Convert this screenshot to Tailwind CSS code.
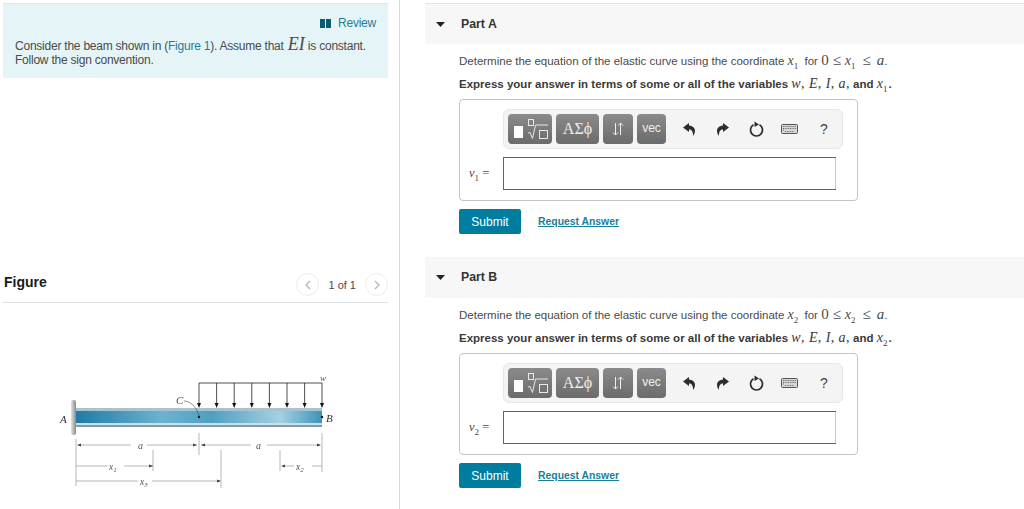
<!DOCTYPE html>
<html lang="en">
<head>
<meta charset="UTF-8">
<title>Beam problem</title>
<script src="https://cdn.jsdelivr.net/npm/@tailwindcss/browser@4"></script>
</head>
<body class="bg-white h-[509px] overflow-hidden font-['Liberation_Sans',sans-serif] text-[#4a4a4a]">
<div class="flex h-[509px]">
  <!-- left column -->
  <div class="w-[400px] h-full border-r border-[#d9d9d9] pl-[3px] pr-[11px] pt-[3px] shrink-0">
    <div class="h-[75px] bg-[#e5f5f7] border-t border-[#dfe7ea] relative pl-[12px] pt-[33px] text-[12px] leading-[14px] tracking-[-0.23px]">
      <div class="absolute right-[12px] top-[12px] flex items-center gap-[7px] text-[#2c7c92]">
        <svg width="11" height="9" viewBox="0 0 11 9"><path d="M0 0h5v9H0zM6 0h5v9H6z" fill="#0c5c70"/></svg>
        <span>Review</span>
      </div>
      <p>Consider the beam shown in (<span class="text-[#1a7f9c]">Figure 1</span>). Assume that <span class="font-['Liberation_Serif',serif] italic text-[18px] leading-[14px] tracking-[0px] ml-[1px]">EI</span> is constant.</p>
      <p>Follow the sign convention.</p>
    </div>
    <div class="mt-[190px] h-[35px] border-b border-[#dde1e5] flex items-start justify-between">
      <h2 class="font-bold text-[14px] leading-[20px] text-[#1a1a1a] ml-[1px] mt-[4px]">Figure</h2>
      <div class="flex items-center gap-[9px] mt-[5px] text-[11px]">
        <span class="w-[23px] h-[23px] rounded-full border border-[#ececec] flex items-center justify-center">
          <svg width="8" height="10" viewBox="0 0 8 10"><path d="M6 1L2 5l4 4" fill="none" stroke="#b5b5b5" stroke-width="1.300"/></svg>
        </span>
        <span class="pt-[1px]">1 of 1</span>
        <span class="w-[23px] h-[23px] rounded-full border border-[#ececec] flex items-center justify-center">
          <svg width="8" height="10" viewBox="0 0 8 10"><path d="M2 1l4 4-4 4" fill="none" stroke="#b5b5b5" stroke-width="1.300"/></svg>
        </span>
      </div>
    </div>
    <svg class="block mt-[62px] ml-[47px] blur-[0.3px]" width="300" height="135" viewBox="50 365 300 135">
      <defs>
        <linearGradient id="beam" x1="0" x2="1" y1="0" y2="0">
          <stop offset="0" stop-color="#1f7ba5"/><stop offset="0.35" stop-color="#6db3cf"/><stop offset="0.55" stop-color="#4f9fc2"/><stop offset="0.83" stop-color="#a5d0e2"/><stop offset="1" stop-color="#3f93b8"/>
        </linearGradient>
        <linearGradient id="wall" x1="0" x2="1" y1="0" y2="0">
          <stop offset="0" stop-color="#e3e3e3"/><stop offset="1" stop-color="#8a8a8a"/>
        </linearGradient>
      </defs>
      <rect x="71" y="400" width="5" height="35" rx="2" fill="url(#wall)"/>
      <rect x="76" y="408" width="246" height="3" fill="#a9c3ce"/>
      <rect x="76" y="411" width="246" height="12" fill="url(#beam)"/>
      <rect x="76" y="423" width="246" height="2" fill="#bfe3f0"/>
      <rect x="76" y="425" width="246" height="2" fill="#8b979d"/>
      <circle cx="199" cy="417" r="1.200" fill="#111"/><circle cx="322" cy="417" r="1.200" fill="#111"/>
      <g stroke="#222" fill="#111" stroke-width="0.800">
        <path d="M199 383H322" fill="none"/>
        <path d="M199 383V405M216.600 383V405M234.200 383V405M251.800 383V405M269.400 383V405M287 383V405M304.600 383V405M322 383V405" fill="none"/>
        <path d="M197 403l2 5 2-5zM214.600 403l2 5 2-5zM232.200 403l2 5 2-5zM249.800 403l2 5 2-5zM267.400 403l2 5 2-5zM285 403l2 5 2-5zM302.600 403l2 5 2-5zM320 403l2 5 2-5z" stroke="none"/>
      </g>
      <path d="M184 401c6 0 13 6 15 15" fill="none" stroke="#444" stroke-width="0.600"/>
      <g stroke="#9a9a9a" stroke-width="0.700" fill="none">
        <path d="M76 439V486M199 433V455M322 433V472M153 450V471M221 450V488M280 450V471"/>
        <path d="M78 445H131M147 445H197M201 445H251M267 445H320"/>
        <path d="M76 466H108M124 466H153M283 466H294M312 466H322M76 481H138M152 481H220"/>
      </g>
      <g fill="#444">
        <path d="M77 445l4-1.500v3zM197 445l-4-1.500v3zM201 445l4-1.500v3zM321 445l-4-1.500v3zM153 466l-4-1.500v3zM281 466l4-1.500v3zM221 481l-4-1.500v3z"/>
      </g>
      <g font-family="Liberation Serif, serif" font-style="italic" fill="#555">
        <text x="60" y="423" font-size="11" fill="#333">A</text>
        <text x="176" y="404" font-size="11">C</text>
        <text x="326" y="422" font-size="11" fill="#333">B</text>
        <text x="320" y="381" font-size="9">w</text>
        <text x="138" y="449" font-size="10">a</text>
        <text x="256" y="449" font-size="10">a</text>
        <text x="109" y="470" font-size="9.500">x<tspan font-size="7" dy="1.500">1</tspan></text>
        <text x="296" y="470" font-size="9.500">x<tspan font-size="7" dy="1.500">2</tspan></text>
        <text x="140" y="485" font-size="9.500">x<tspan font-size="7" dy="1.500">3</tspan></text>
      </g>
    </svg>
  </div>

  <!-- right column -->
  <div class="flex-1 pl-[25px] pt-[3px] min-w-0">
    <section class="h-[254px]">
      <div class="h-[41px] bg-[#f7f7f7] border-t border-[#e5e5e5] flex items-center pl-[11px] text-[12.300px] font-bold text-[#333]">
        <svg width="9" height="5" viewBox="0 0 9 5"><path d="M0 0h9L4.500 5z" fill="#222"/></svg>
        <span class="ml-[16px]">Part A</span>
      </div>
      <div class="pl-[34px]">
        <p class="mt-[9px] h-[15px] text-[11.500px] leading-[15px] whitespace-nowrap">Determine the equation of the elastic curve using the coordinate <span class="font-['Liberation_Serif',serif] italic text-[14px] leading-[15px] mr-[3px]">x<sub class="text-[9px] not-italic align-[-2px] leading-[0]">1</sub></span> for <span class="font-['Liberation_Serif',serif] text-[15px] leading-[15px]">0<span class="mx-[4px]">≤</span><i class="text-[14px] mr-[3px]">x<sub class="text-[9px] not-italic align-[-2px] leading-[0]">1</sub></i><span class="mx-[4px]">≤</span><i class="text-[15px] ml-[2px]">a</i></span>.</p>
        <p class="mt-[8px] h-[16px] text-[11.500px] leading-[16px] font-bold text-[#3a3a3a] whitespace-nowrap">Express your answer in terms of some or all of the variables <span class="font-['Liberation_Serif',serif] font-normal text-[14px] leading-[16px] tracking-[0.4px]"><i>w</i>, <i>E</i>, <i>I</i>, <i>a</i>,</span> and <span class="font-['Liberation_Serif',serif] font-normal italic text-[14px] leading-[16px] mr-[1px]">x<sub class="text-[9px] not-italic align-[-2px] leading-[0]">1</sub></span>.</p>
        <div class="mt-[7px] w-[399px] h-[102px] border border-[#c4c4c4] rounded-[4px] pt-[9px] pl-[43px]">
          <div class="w-[340px] h-[40px] bg-[#f4f4f4] border border-[#e6e6e6] rounded-[6px] flex items-center pl-[4px]">
            <div class="w-[44px] h-[30px] rounded-[4px] bg-gradient-to-b from-[#8b8b8b] to-[#6b6b6b]">
              <svg width="44" height="30" viewBox="0 0 44 30" fill="none" stroke="#e8e8e8" stroke-width="1"><rect x="6" y="12" width="9" height="12" fill="#fff" stroke="none"/><rect x="20.500" y="5.500" width="5" height="6"/><path d="M20 19l2-.5 2.500 6 3-13.500H40"/><rect x="31.500" y="16.500" width="8" height="8"/></svg>
            </div>
            <div class="ml-[4px] w-[43px] h-[30px] rounded-[4px] bg-gradient-to-b from-[#8b8b8b] to-[#6b6b6b] text-[#efefef] text-[16px] flex items-center justify-center font-['Liberation_Serif',serif]">ΑΣϕ</div>
            <div class="ml-[4px] w-[30px] h-[30px] rounded-[4px] bg-gradient-to-b from-[#8b8b8b] to-[#6b6b6b] flex items-center justify-center">
              <svg width="12" height="14" viewBox="0 0 12 14" fill="none" stroke="#efefef" stroke-width="1"><path d="M3.500 1v12M1 10.500l2.500 2.500 2.500-2.500M8.500 13V1M6 3.500L8.500 1 11 3.500"/></svg>
            </div>
            <div class="ml-[4px] w-[29px] h-[30px] rounded-[4px] bg-gradient-to-b from-[#8b8b8b] to-[#6b6b6b] text-[#efefef] text-[12px] flex items-center justify-center pb-[2px]">vec</div>
            <svg class="ml-[17px]" width="13" height="13" viewBox="0 0 13 13"><path d="M6 0L0 4.500 6 9V6.500c2.500 0 4 1.500 4.200 6.500 2.800-4 3-9.500-4.200-10.500z" fill="#2e2e2e"/></svg>
            <svg class="ml-[20px]" width="13" height="13" viewBox="0 0 13 13"><path d="M7 0l6 4.500L7 9V6.500C4.500 6.500 3 8 2.800 13 0 9-.2 3.500 7 2.500z" fill="#2e2e2e"/></svg>
            <svg class="ml-[20px]" width="15" height="16" viewBox="0 0 15 16" fill="none"><path d="M4.500 3.800a6 6 0 1 0 6 0" stroke="#2e2e2e" stroke-width="1.700"/><path d="M5.500 .5l4.500 3-4.500 2.500z" fill="#2e2e2e"/></svg>
            <svg class="ml-[17px]" width="17" height="10" viewBox="0 0 17 10"><rect x=".5" y=".5" width="16" height="9" rx="1" fill="#d8d8d8" stroke="#555"/><path d="M2 2.500h13M2 4.500h13M2 6h1M4 7.500h9" stroke="#555" stroke-width=".8" stroke-dasharray="1 .7"/></svg>
            <span class="ml-[22px] text-[14px] text-[#444]">?</span>
          </div>
          <div class="flex items-center -ml-[34px] mt-[8px]">
            <span class="w-[34px] text-[12.500px] font-['Liberation_Serif',serif]"><i>v<sub class="text-[9px] not-italic align-[-2px] leading-[0]">1</sub></i> =</span>
            <div class="w-[333px] h-[33px] bg-[#1b7d98] py-[1px] pl-[1px] flex">
              <div class="flex-1 bg-white"></div>
              <div class="w-[1px] bg-[#a9d3e0]"></div>
            </div>
          </div>
        </div>
        <div class="mt-[8px] flex items-center">
          <button class="w-[62px] h-[25px] bg-[#007c9f] rounded-[2px] text-white text-[12px]">Submit</button>
          <a class="ml-[17px] text-[#1a7f9c] text-[10.400px] font-bold underline">Request Answer</a>
        </div>
      </div>
    </section>

    <section>
      <div class="h-[41px] bg-[#f7f7f7] flex items-center pl-[11px] text-[12.300px] font-bold text-[#333]">
        <svg width="9" height="5" viewBox="0 0 9 5"><path d="M0 0h9L4.500 5z" fill="#222"/></svg>
        <span class="ml-[16px]">Part B</span>
      </div>
      <div class="pl-[34px]">
        <p class="mt-[9px] h-[15px] text-[11.500px] leading-[15px] whitespace-nowrap">Determine the equation of the elastic curve using the coordinate <span class="font-['Liberation_Serif',serif] italic text-[14px] leading-[15px] mr-[3px]">x<sub class="text-[9px] not-italic align-[-2px] leading-[0]">2</sub></span> for <span class="font-['Liberation_Serif',serif] text-[15px] leading-[15px]">0<span class="mx-[4px]">≤</span><i class="text-[14px] mr-[3px]">x<sub class="text-[9px] not-italic align-[-2px] leading-[0]">2</sub></i><span class="mx-[4px]">≤</span><i class="text-[15px] ml-[2px]">a</i></span>.</p>
        <p class="mt-[8px] h-[16px] text-[11.500px] leading-[16px] font-bold text-[#3a3a3a] whitespace-nowrap">Express your answer in terms of some or all of the variables <span class="font-['Liberation_Serif',serif] font-normal text-[14px] leading-[16px] tracking-[0.4px]"><i>w</i>, <i>E</i>, <i>I</i>, <i>a</i>,</span> and <span class="font-['Liberation_Serif',serif] font-normal italic text-[14px] leading-[16px] mr-[1px]">x<sub class="text-[9px] not-italic align-[-2px] leading-[0]">2</sub></span>.</p>
        <div class="mt-[7px] w-[399px] h-[102px] border border-[#c4c4c4] rounded-[4px] pt-[9px] pl-[43px]">
          <div class="w-[340px] h-[40px] bg-[#f4f4f4] border border-[#e6e6e6] rounded-[6px] flex items-center pl-[4px]">
            <div class="w-[44px] h-[30px] rounded-[4px] bg-gradient-to-b from-[#8b8b8b] to-[#6b6b6b]">
              <svg width="44" height="30" viewBox="0 0 44 30" fill="none" stroke="#e8e8e8" stroke-width="1"><rect x="6" y="12" width="9" height="12" fill="#fff" stroke="none"/><rect x="20.500" y="5.500" width="5" height="6"/><path d="M20 19l2-.5 2.500 6 3-13.500H40"/><rect x="31.500" y="16.500" width="8" height="8"/></svg>
            </div>
            <div class="ml-[4px] w-[43px] h-[30px] rounded-[4px] bg-gradient-to-b from-[#8b8b8b] to-[#6b6b6b] text-[#efefef] text-[16px] flex items-center justify-center font-['Liberation_Serif',serif]">ΑΣϕ</div>
            <div class="ml-[4px] w-[30px] h-[30px] rounded-[4px] bg-gradient-to-b from-[#8b8b8b] to-[#6b6b6b] flex items-center justify-center">
              <svg width="12" height="14" viewBox="0 0 12 14" fill="none" stroke="#efefef" stroke-width="1"><path d="M3.500 1v12M1 10.500l2.500 2.500 2.500-2.500M8.500 13V1M6 3.500L8.500 1 11 3.500"/></svg>
            </div>
            <div class="ml-[4px] w-[29px] h-[30px] rounded-[4px] bg-gradient-to-b from-[#8b8b8b] to-[#6b6b6b] text-[#efefef] text-[12px] flex items-center justify-center pb-[2px]">vec</div>
            <svg class="ml-[17px]" width="13" height="13" viewBox="0 0 13 13"><path d="M6 0L0 4.500 6 9V6.500c2.500 0 4 1.500 4.200 6.500 2.800-4 3-9.500-4.200-10.500z" fill="#2e2e2e"/></svg>
            <svg class="ml-[20px]" width="13" height="13" viewBox="0 0 13 13"><path d="M7 0l6 4.500L7 9V6.500C4.500 6.500 3 8 2.800 13 0 9-.2 3.500 7 2.500z" fill="#2e2e2e"/></svg>
            <svg class="ml-[20px]" width="15" height="16" viewBox="0 0 15 16" fill="none"><path d="M4.500 3.800a6 6 0 1 0 6 0" stroke="#2e2e2e" stroke-width="1.700"/><path d="M5.500 .5l4.500 3-4.500 2.500z" fill="#2e2e2e"/></svg>
            <svg class="ml-[17px]" width="17" height="10" viewBox="0 0 17 10"><rect x=".5" y=".5" width="16" height="9" rx="1" fill="#d8d8d8" stroke="#555"/><path d="M2 2.500h13M2 4.500h13M2 6h1M4 7.500h9" stroke="#555" stroke-width=".8" stroke-dasharray="1 .7"/></svg>
            <span class="ml-[22px] text-[14px] text-[#444]">?</span>
          </div>
          <div class="flex items-center -ml-[34px] mt-[8px]">
            <span class="w-[34px] text-[12.500px] font-['Liberation_Serif',serif]"><i>v<sub class="text-[9px] not-italic align-[-2px] leading-[0]">2</sub></i> =</span>
            <div class="w-[333px] h-[33px] bg-[#1b7d98] py-[1px] pl-[1px] flex">
              <div class="flex-1 bg-white"></div>
              <div class="w-[1px] bg-[#a9d3e0]"></div>
            </div>
          </div>
        </div>
        <div class="mt-[8px] flex items-center">
          <button class="w-[62px] h-[25px] bg-[#007c9f] rounded-[2px] text-white text-[12px]">Submit</button>
          <a class="ml-[17px] text-[#1a7f9c] text-[10.400px] font-bold underline">Request Answer</a>
        </div>
      </div>
    </section>
  </div>
</div>
</body>
</html>
